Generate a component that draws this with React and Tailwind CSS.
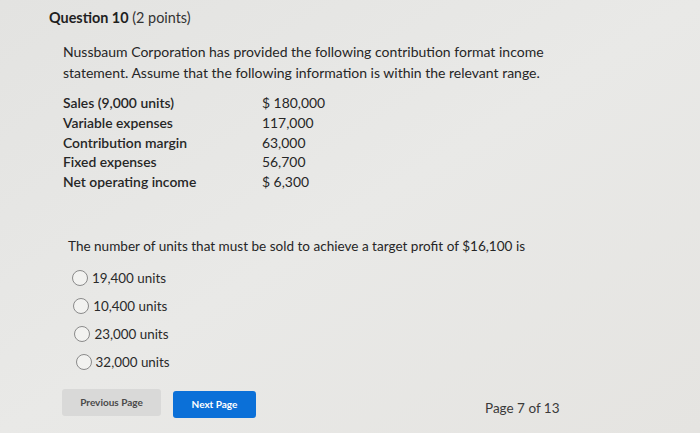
const rows = [
  ["Sales (9,000 units)", "$ 180,000"],
  ["Variable expenses", "117,000"],
  ["Contribution margin", "63,000"],
  ["Fixed expenses", "56,700"],
  ["Net operating income", "$ 6,300"],
];

const options = ["19,400 units", "10,400 units", "23,000 units", "32,000 units"];

export default function App() {
  return (
    <div
      className="w-[700px] h-[433px] overflow-hidden bg-gradient-to-br from-[#e3e3e1] via-[#e9e9e7] to-[#e5e4e1] text-[#1f1f1f]"
      style={{ fontFamily: "Lato, 'Open Sans', sans-serif" }}
    >
      <div className="pl-[49px] pt-[8px]">
        {/* header */}
        <h1 className="text-[14.4px] leading-[20px]">
          <span className="font-bold">Question 10</span>{" "}
          <span className="text-[#333]">(2 points)</span>
        </h1>

        {/* body */}
        <div className="pl-[14px] pt-[13px]">
          <p className="text-[14px] leading-[21px] whitespace-nowrap text-[#262626]">
            Nussbaum Corporation has provided the following contribution format income
            <br />
            statement. Assume that the following information is within the relevant range.
          </p>

          <div className="mt-[10px] grid grid-cols-[199px_auto] text-[13.9px] leading-[19.8px] text-[#262626]">
            {rows.map(([label, value]) => (
              <div key={label} className="contents">
                <div className="font-semibold">{label}</div>
                <div>{value}</div>
              </div>
            ))}
          </div>

          <p className="pl-[5px] mt-[44px] text-[13.55px] leading-[20px] whitespace-nowrap text-[#262626]">
            The number of units that must be sold to achieve a target profit of $16,100 is
          </p>

          <div className="pl-[9px] mt-[13px] flex flex-col gap-[10px]">
            {options.map((o, i) => (
              <label key={o} className="flex items-center gap-[4px] h-[18px]" style={{ marginLeft: i * 1.2 }}>
                <span className="w-[16px] h-[16px] rounded-full border border-[#8a8a8a] bg-[#f2f2f0]" />
                <span className="text-[13.4px] text-[#2a2a2a]">{o}</span>
              </label>
            ))}
          </div>

          {/* footer */}
          <div className="mt-[18px] flex items-start">
            <button className="-ml-[1px] w-[99px] h-[27px] rounded-[3px] bg-[#d9d9d8] text-[10px] font-bold text-[#4a4a4a]">
              Previous Page
            </button>
            <button className="ml-[12px] mt-[2px] w-[83px] h-[27px] rounded-[3px] bg-[#0b70d8] text-[10px] font-bold text-white">
              Next Page
            </button>
            <span className="ml-[229px] mt-[10px] text-[13.5px] leading-[18px] text-[#3a3a3a]">Page 7 of 13</span>
          </div>
        </div>
      </div>
    </div>
  );
}
